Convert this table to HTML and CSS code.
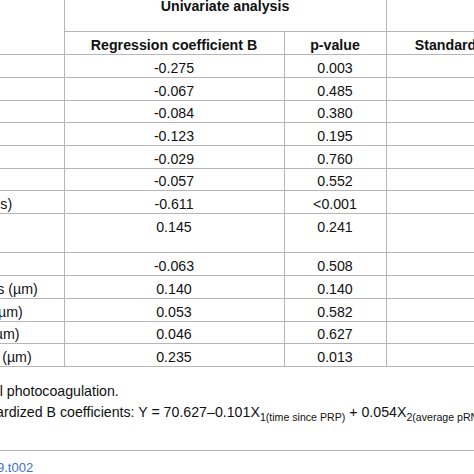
FILE: index.html
```html
<!DOCTYPE html>
<html lang="en">
<head>
<meta charset="utf-8">
<title>Table 2</title>
<link rel="stylesheet" href="styles.css">
</head>
<body>
<div class="page">
  <table class="stats">
    <colgroup>
      <col class="c-var"><col class="c-b"><col class="c-p"><col class="c-sb"><col class="c-p2">
    </colgroup>
    <thead>
      <tr class="group-row">
        <th rowspan="2" class="var">Variables</th>
        <th colspan="2">Univariate analysis</th>
        <th colspan="2">Multivariate analysis</th>
      </tr>
      <tr>
        <th>Regression coefficient B</th>
        <th>p-value</th>
        <th>Standardized coefficient β</th>
        <th>p-value</th>
      </tr>
    </thead>
    <tbody>
      <tr><td class="var">Age (years)</td><td>-0.275</td><td>0.003</td><td></td><td></td></tr>
      <tr><td class="var">Sex (male/female)</td><td>-0.067</td><td>0.485</td><td></td><td></td></tr>
      <tr><td class="var">DM duration (years)</td><td>-0.084</td><td>0.380</td><td></td><td></td></tr>
      <tr><td class="var">HbA1c (%)</td><td>-0.123</td><td>0.195</td><td></td><td></td></tr>
      <tr><td class="var">Hypertension</td><td>-0.029</td><td>0.760</td><td></td><td></td></tr>
      <tr><td class="var">BCVA (logMAR)</td><td>-0.057</td><td>0.552</td><td></td><td></td></tr>
      <tr><td class="var">Time since PRP (months)</td><td>-0.611</td><td>&lt;0.001</td><td></td><td></td></tr>
      <tr><td class="var two-line">Total number of<br>laser spots</td><td>0.145</td><td>0.241</td><td></td><td></td></tr>
      <tr><td class="var">Axial length (mm)</td><td>-0.063</td><td>0.508</td><td></td><td></td></tr>
      <tr><td class="var">Mean macular thickness (µm)</td><td>0.140</td><td>0.140</td><td></td><td></td></tr>
      <tr><td class="var">Outer retina thickness (µm)</td><td>0.053</td><td>0.582</td><td></td><td></td></tr>
      <tr><td class="var">Inner retina thickness (µm)</td><td>0.046</td><td>0.627</td><td></td><td></td></tr>
      <tr><td class="var">Mean pRNFL thickness (µm)</td><td>0.235</td><td>0.013</td><td></td><td></td></tr>
    </tbody>
  </table>

  <div class="notes">
    <p class="note">PRP, panretinal photocoagulation.</p>
    <p class="note">Using unstandardized B coefficients: Y = 70.627–0.101X<sub class="idx">1(time since PRP)</sub> + 0.054X<sub class="idx">2(average pRNFL thickness)</sub></p>
  </div>

  <div class="rule"></div>

  <p class="doi"><a class="doi-link" href="#">https://doi.org/10.1371/journal.pone.0200119.t002</a></p>
</div>
</body>
</html>
```

FILE: styles.css
```css
html, body {
  margin: 0;
  padding: 0;
  width: 474px;
  height: 474px;
  overflow: hidden;
  background: #ffffff;
}

.page {
  width: 474px;
  font-family: "Liberation Sans", Arial, sans-serif;
  color: #111111;
}

.stats {
  margin-left: -152.7px;
  margin-top: -6.4px;
  border-collapse: collapse;
  table-layout: fixed;
  width: 874.7px;
  font-size: 14.2px;
  line-height: 18px;
}

.c-var { width: 216.7px; }
.c-b { width: 220px; }
.c-p { width: 102px; }
.c-sb { width: 234px; }
.c-p2 { width: 102px; }

.stats th,
.stats td {
  padding: 3.7px 4px 0 4px;
  vertical-align: top;
  text-align: center;
  white-space: nowrap;
  border-bottom: 1px solid #b6b6b6;
  border-left: 1px solid #b6b6b6;
}

.stats th {
  font-weight: bold;
}

.stats .var {
  text-align: left;
  border-left: none;
}

.group-row th {
  padding-bottom: 16.2px;
}

.stats .two-line {
  line-height: 17.4px;
}

.notes {
  margin-left: -94.7px;
  margin-top: 14px;
  font-size: 14.2px;
  line-height: 21px;
}

.note {
  margin: 0;
  white-space: nowrap;
}

.idx {
  font-size: 10.6px;
  line-height: 0;
  vertical-align: -3.5px;
}

.rule {
  margin-top: 26.7px;
  height: 0;
  border-top: 1px solid #b6b6b6;
}

.doi {
  margin: 9px 0 0 -253.6px;
  font-size: 13px;
  line-height: 16px;
  white-space: nowrap;
}

.doi-link {
  color: #3f72c4;
  text-decoration: none;
}
```
